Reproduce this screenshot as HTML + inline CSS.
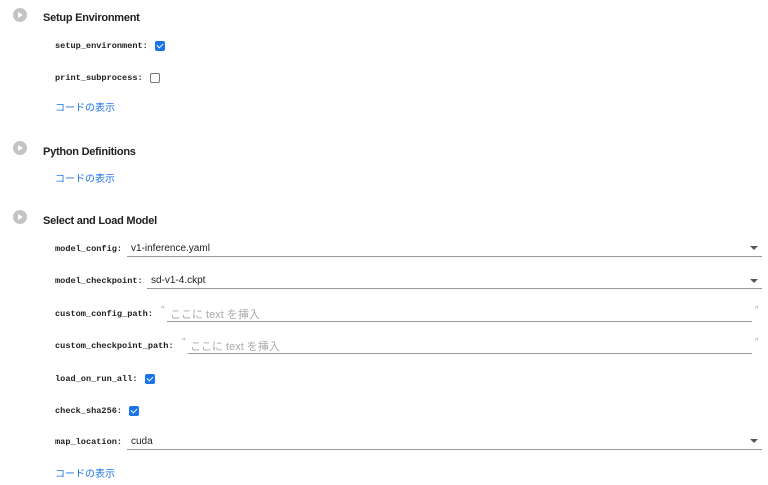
<!DOCTYPE html>
<html><head><meta charset="utf-8"><style>
body{margin:0;width:768px;height:485px;background:#fff;position:relative;overflow:hidden;font-family:"Liberation Sans","Noto Sans CJK JP",sans-serif;}
.a{position:absolute;white-space:nowrap}
.play{position:absolute;width:14px;height:14px;border-radius:50%;background:#c4c4c4;left:13px}
.play:after{content:"";position:absolute;left:5px;top:3.5px;border-left:5px solid #fff;border-top:3.5px solid transparent;border-bottom:3.5px solid transparent}
.t{font-weight:bold;font-size:11px;letter-spacing:-0.25px;color:#212121;left:43px}
.l{font-family:"Liberation Mono",monospace;font-weight:bold;font-size:8.6px;color:#212121;left:55px}
.lk{font-size:10px;color:#1a73e8;left:55px;font-family:"Noto Sans CJK JP",sans-serif}
.cb{position:absolute;width:10px;height:10px;border-radius:2px;background:#1a73e8}
.cb:after{content:"";position:absolute;left:3px;top:1px;width:3px;height:5px;border:solid #fff;border-width:0 1.5px 1.5px 0;transform:rotate(45deg)}
.cbo{position:absolute;width:8px;height:8px;border:1px solid #777;border-radius:2px}
.sel{position:absolute;height:1px;background:#999;right:6px}
.st{font-size:10px;color:#212121}
.arr{position:absolute;right:10px;border-top:4px solid #555;border-left:4px solid transparent;border-right:4px solid transparent}
.ph{font-size:11px;color:#aaa;font-family:"Liberation Sans","Noto Sans CJK JP",sans-serif}
.q{font-size:10px;color:#aaa}
</style></head><body>
<div class="play" style="top:8px"></div>
<div class="a t" style="top:12px">Setup Environment</div>
<div class="a l" style="top:41px">setup_environment:</div>
<div class="cb" style="left:155px;top:41px"></div>
<div class="a l" style="top:73px">print_subprocess:</div>
<div class="cbo" style="left:150px;top:73px"></div>
<div class="a lk" style="top:99px">コードの表示</div>

<div class="play" style="top:141px"></div>
<div class="a t" style="top:146px">Python Definitions</div>
<div class="a lk" style="top:170px">コードの表示</div>

<div class="play" style="top:210px"></div>
<div class="a t" style="top:215px">Select and Load Model</div>

<div class="a l" style="top:244px">model_config:</div>
<div class="a st" style="left:131px;top:243px">v1-inference.yaml</div>
<div class="sel" style="left:127px;top:256px"></div>
<div class="arr" style="top:246px"></div>

<div class="a l" style="top:276px">model_checkpoint:</div>
<div class="a st" style="left:151px;top:275px">sd-v1-4.ckpt</div>
<div class="sel" style="left:147px;top:288px"></div>
<div class="arr" style="top:279px"></div>

<div class="a l" style="top:309px">custom_config_path:</div>
<div class="a q" style="left:161px;top:305px">"</div>
<div class="a ph" style="left:170px;top:306px">ここに text を挿入</div>
<div class="sel" style="left:167px;right:16px;top:321px"></div>
<div class="a q" style="left:755px;top:305px">"</div>

<div class="a l" style="top:341px">custom_checkpoint_path:</div>
<div class="a q" style="left:182px;top:337px">"</div>
<div class="a ph" style="left:190px;top:338px">ここに text を挿入</div>
<div class="sel" style="left:188px;right:16px;top:353px"></div>
<div class="a q" style="left:755px;top:337px">"</div>

<div class="a l" style="top:374px">load_on_run_all:</div>
<div class="cb" style="left:145px;top:374px"></div>
<div class="a l" style="top:406px">check_sha256:</div>
<div class="cb" style="left:129px;top:406px"></div>

<div class="a l" style="top:437px">map_location:</div>
<div class="a st" style="left:131px;top:436px">cuda</div>
<div class="sel" style="left:127px;top:449px"></div>
<div class="arr" style="top:439px"></div>
<div class="a lk" style="top:465px">コードの表示</div>
</body></html>
